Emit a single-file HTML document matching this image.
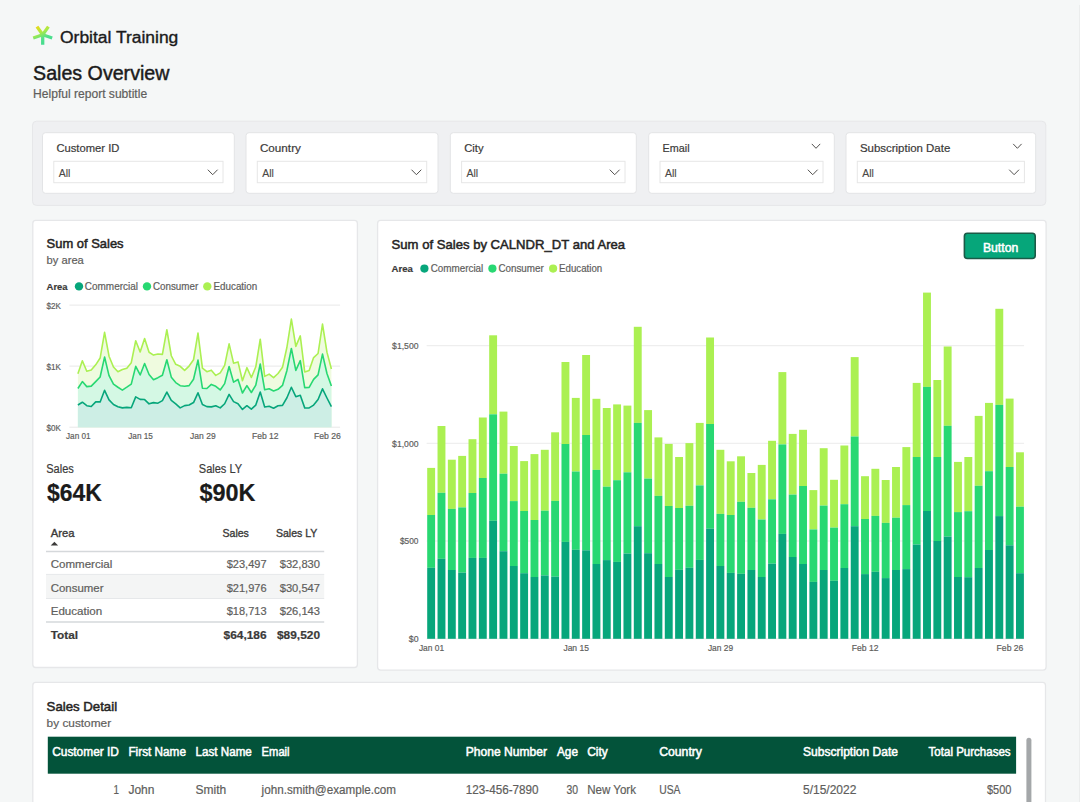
<!DOCTYPE html>
<html><head><meta charset="utf-8"><title>Sales Overview</title>
<style>
html,body{margin:0;padding:0;background:#f5f7f7;overflow:hidden;}
svg{display:block;font-family:"Liberation Sans", sans-serif;}
</style></head>
<body>
<svg width="1080" height="802" viewBox="0 0 1080 802">
<rect x="0" y="0" width="1080" height="802" fill="#f5f7f7"/>
<line x1="1079.5" y1="5" x2="1079.5" y2="802" stroke="#ebeded" stroke-width="1"/>
<defs><linearGradient id="lg" gradientUnits="userSpaceOnUse" x1="38" y1="26.5" x2="46" y2="43"><stop offset="0" stop-color="#e8da18"/><stop offset="0.35" stop-color="#a8ea48"/><stop offset="0.7" stop-color="#52e08a"/><stop offset="1" stop-color="#45dc90"/></linearGradient></defs>
<path d="M42.7,34.8 L37.0,26.6 M42.7,34.8 L48.4,26.6 M42.7,34.8 L33.2,38.0 M42.7,34.8 L52.2,38.0 M42.7,34.8 L42.7,44.8" stroke="url(#lg)" stroke-width="3.3" fill="none"/>
<text x="60" y="42.6" font-size="16" fill="#1b1b1b" textLength="118.3" lengthAdjust="spacingAndGlyphs" stroke="#1b1b1b" stroke-width="0.35">Orbital Training</text>
<text x="33.1" y="79.9" font-size="20" fill="#1b1b1b" textLength="136.3" lengthAdjust="spacingAndGlyphs" stroke="#1b1b1b" stroke-width="0.45">Sales Overview</text>
<text x="33.1" y="98" font-size="12" fill="#605e5c" textLength="114" lengthAdjust="spacingAndGlyphs" stroke="#605e5c" stroke-width="0.2">Helpful report subtitle</text>
<rect x="32.5" y="121.2" width="1013.3" height="84.2" fill="#eff0f2" stroke="#e6e7e9" stroke-width="1" rx="4"/>
<rect x="42.5" y="132.7" width="191.8" height="60.6" fill="#ffffff" stroke="#e3e4e6" stroke-width="1" rx="3"/>
<text x="56.4" y="152" font-size="11.5" fill="#3b3a39" textLength="63" lengthAdjust="spacingAndGlyphs" stroke="#3b3a39" stroke-width="0.2">Customer ID</text>
<rect x="53.8" y="161.3" width="169.20000000000002" height="21.4" fill="#ffffff" stroke="#e6e6e6" stroke-width="1"/>
<text x="58.7" y="177" font-size="10.5" fill="#4a4846" stroke="#4a4846" stroke-width="0.12">All</text>
<polyline points="207.8,169.7 212.70000000000002,174.7 217.60000000000002,169.7" fill="none" stroke="#4a4846" stroke-width="0.95"/>
<rect x="246" y="132.7" width="192" height="60.6" fill="#ffffff" stroke="#e3e4e6" stroke-width="1" rx="3"/>
<text x="259.9" y="152" font-size="11.5" fill="#3b3a39" textLength="41" lengthAdjust="spacingAndGlyphs" stroke="#3b3a39" stroke-width="0.2">Country</text>
<rect x="257.3" y="161.3" width="169.4" height="21.4" fill="#ffffff" stroke="#e6e6e6" stroke-width="1"/>
<text x="262.2" y="177" font-size="10.5" fill="#4a4846" stroke="#4a4846" stroke-width="0.12">All</text>
<polyline points="411.5,169.7 416.4,174.7 421.29999999999995,169.7" fill="none" stroke="#4a4846" stroke-width="0.95"/>
<rect x="450.3" y="132.7" width="185.99999999999994" height="60.6" fill="#ffffff" stroke="#e3e4e6" stroke-width="1" rx="3"/>
<text x="464.2" y="152" font-size="11.5" fill="#3b3a39" textLength="19.4" lengthAdjust="spacingAndGlyphs" stroke="#3b3a39" stroke-width="0.2">City</text>
<rect x="461.6" y="161.3" width="163.39999999999995" height="21.4" fill="#ffffff" stroke="#e6e6e6" stroke-width="1"/>
<text x="466.5" y="177" font-size="10.5" fill="#4a4846" stroke="#4a4846" stroke-width="0.12">All</text>
<polyline points="609.8,169.7 614.6999999999999,174.7 619.5999999999999,169.7" fill="none" stroke="#4a4846" stroke-width="0.95"/>
<rect x="648.7" y="132.7" width="185.5999999999999" height="60.6" fill="#ffffff" stroke="#e3e4e6" stroke-width="1" rx="3"/>
<text x="662.6" y="152" font-size="11.5" fill="#3b3a39" textLength="27" lengthAdjust="spacingAndGlyphs" stroke="#3b3a39" stroke-width="0.2">Email</text>
<rect x="660.0" y="161.3" width="162.99999999999991" height="21.4" fill="#ffffff" stroke="#e6e6e6" stroke-width="1"/>
<text x="664.9000000000001" y="177" font-size="10.5" fill="#4a4846" stroke="#4a4846" stroke-width="0.12">All</text>
<polyline points="807.8,169.7 812.6999999999999,174.7 817.5999999999999,169.7" fill="none" stroke="#4a4846" stroke-width="0.95"/>
<polyline points="811.8,143.9 816.0,148.29999999999998 820.2,143.9" fill="none" stroke="#4a4846" stroke-width="0.95"/>
<rect x="846" y="132.7" width="189.70000000000005" height="60.6" fill="#ffffff" stroke="#e3e4e6" stroke-width="1" rx="3"/>
<text x="859.9" y="152" font-size="11.5" fill="#3b3a39" textLength="90.4" lengthAdjust="spacingAndGlyphs" stroke="#3b3a39" stroke-width="0.2">Subscription Date</text>
<rect x="857.3" y="161.3" width="167.10000000000005" height="21.4" fill="#ffffff" stroke="#e6e6e6" stroke-width="1"/>
<text x="862.2" y="177" font-size="10.5" fill="#4a4846" stroke="#4a4846" stroke-width="0.12">All</text>
<polyline points="1009.2,169.7 1014.1,174.7 1019.0,169.7" fill="none" stroke="#4a4846" stroke-width="0.95"/>
<polyline points="1013.2,143.9 1017.4000000000001,148.29999999999998 1021.6000000000001,143.9" fill="none" stroke="#4a4846" stroke-width="0.95"/>
<rect x="32.8" y="220.4" width="324.6" height="447.1" fill="#ffffff" stroke="#e6e7e9" stroke-width="1.3" rx="3"/>
<rect x="377.6" y="220.4" width="668.5" height="449.7" fill="#ffffff" stroke="#e6e7e9" stroke-width="1.3" rx="3"/>
<rect x="32.8" y="682.4" width="1012.7" height="200" fill="#ffffff" stroke="#e6e7e9" stroke-width="1.3" rx="3"/>
<text x="46.6" y="248.2" font-size="13" fill="#252423" textLength="77" lengthAdjust="spacingAndGlyphs" stroke="#252423" stroke-width="0.5">Sum of Sales</text>
<text x="46.6" y="263.5" font-size="11.5" fill="#605e5c" textLength="37.2" lengthAdjust="spacingAndGlyphs" stroke="#605e5c" stroke-width="0.2">by area</text>
<text x="46.6" y="289.7" font-size="9.8" fill="#3b3a39" font-weight="700" textLength="21" lengthAdjust="spacingAndGlyphs" stroke="#3b3a39" stroke-width="0.2">Area</text>
<circle cx="79" cy="286.4" r="4.2" fill="#07a67b"/>
<text x="84.8" y="289.7" font-size="10.3" fill="#605e5c" textLength="53.2" lengthAdjust="spacingAndGlyphs" stroke="#605e5c" stroke-width="0.2">Commercial</text>
<circle cx="147" cy="286.4" r="4.2" fill="#28d872"/>
<text x="152.9" y="289.7" font-size="10.3" fill="#605e5c" textLength="45.3" lengthAdjust="spacingAndGlyphs" stroke="#605e5c" stroke-width="0.2">Consumer</text>
<circle cx="207.3" cy="286.4" r="4.2" fill="#abf052"/>
<text x="213.5" y="289.7" font-size="10.3" fill="#605e5c" textLength="43.7" lengthAdjust="spacingAndGlyphs" stroke="#605e5c" stroke-width="0.2">Education</text>
<line x1="69.4" y1="305.1" x2="340.1" y2="305.1" stroke="#e8e8e8" stroke-width="1"/>
<text x="46.6" y="308.5" font-size="9.2" fill="#605e5c" textLength="14.4" lengthAdjust="spacingAndGlyphs" stroke="#605e5c" stroke-width="0.2">$2K</text>
<line x1="69.4" y1="366.1" x2="340.1" y2="366.1" stroke="#e8e8e8" stroke-width="1"/>
<text x="46.6" y="369.5" font-size="9.2" fill="#605e5c" textLength="14.4" lengthAdjust="spacingAndGlyphs" stroke="#605e5c" stroke-width="0.2">$1K</text>
<line x1="69.4" y1="427.2" x2="340.1" y2="427.2" stroke="#e8e8e8" stroke-width="1"/>
<text x="46.6" y="430.59999999999997" font-size="9.2" fill="#605e5c" textLength="14.4" lengthAdjust="spacingAndGlyphs" stroke="#605e5c" stroke-width="0.2">$0K</text>
<polygon points="77.90,373.80 82.35,360.71 86.79,371.24 91.24,370.06 95.69,364.84 100.14,358.06 104.58,332.38 109.03,356.21 113.48,366.96 117.93,371.68 122.37,369.49 126.82,368.15 131.27,362.68 135.72,340.72 140.16,351.93 144.61,338.53 149.06,352.22 153.51,355.09 157.95,353.96 162.40,354.34 166.85,329.72 171.29,355.75 175.74,364.28 180.19,366.31 184.64,370.40 189.08,366.06 193.53,359.75 197.98,333.06 202.43,368.15 206.87,371.74 211.32,370.18 215.77,375.40 220.22,372.87 224.66,365.34 229.11,343.87 233.56,363.18 238.01,361.90 242.45,380.74 246.90,367.65 251.35,377.52 255.79,366.81 260.24,339.19 264.69,376.40 269.14,374.09 273.58,377.59 278.03,373.52 282.48,367.31 286.93,347.25 291.37,319.03 295.82,346.34 300.27,335.87 304.72,371.93 309.16,370.40 313.61,357.56 318.06,353.50 322.51,324.10 326.95,352.15 331.40,368.93 331.40,427.20 77.90,427.20" fill="#effbdf"/>
<polygon points="77.90,388.52 82.35,381.58 86.79,386.61 91.24,386.15 95.69,381.65 100.14,376.96 104.58,357.06 109.03,375.62 113.48,384.18 117.93,387.27 122.37,390.08 126.82,387.18 131.27,384.12 135.72,366.34 140.16,374.93 144.61,363.53 149.06,374.43 153.51,379.68 157.95,377.65 162.40,375.18 166.85,359.75 171.29,377.15 175.74,382.55 180.19,385.71 184.64,386.33 189.08,385.65 193.53,379.27 197.98,360.09 202.43,388.18 206.87,388.52 211.32,384.40 215.77,386.27 220.22,389.93 224.66,383.62 229.11,366.46 233.56,382.15 238.01,379.46 242.45,393.02 246.90,385.58 251.35,392.46 255.79,385.15 260.24,363.99 264.69,389.77 269.14,388.80 273.58,390.99 278.03,389.36 282.48,385.43 286.93,370.40 291.37,348.50 295.82,370.40 300.27,360.65 304.72,387.61 309.16,387.33 313.61,379.40 318.06,374.84 322.51,354.12 326.95,373.52 331.40,385.93 331.40,427.20 77.90,427.20" fill="#d4f8e4"/>
<polygon points="77.90,405.02 82.35,402.21 86.79,405.70 91.24,406.55 95.69,401.92 100.14,401.92 104.58,390.33 109.03,399.83 113.48,404.45 117.93,406.70 122.37,407.89 126.82,407.39 131.27,407.80 135.72,396.92 140.16,399.39 144.61,399.55 149.06,403.83 153.51,402.61 157.95,403.17 162.40,400.58 166.85,392.02 171.29,400.46 175.74,403.83 180.19,407.89 184.64,405.64 189.08,405.02 193.53,402.55 197.98,392.80 202.43,404.45 206.87,406.61 211.32,406.89 215.77,405.70 220.22,407.89 224.66,403.74 229.11,394.43 233.56,401.64 238.01,403.83 242.45,409.42 246.90,405.70 251.35,409.08 255.79,405.08 260.24,392.02 264.69,406.99 269.14,406.27 273.58,408.24 278.03,405.70 282.48,405.42 286.93,397.77 291.37,387.27 295.82,396.64 300.27,395.27 304.72,407.89 309.16,407.95 313.61,405.08 318.06,399.46 322.51,388.86 326.95,397.99 331.40,406.70 331.40,427.20 77.90,427.20" fill="#cdeee5"/>
<polyline points="77.90,373.80 82.35,360.71 86.79,371.24 91.24,370.06 95.69,364.84 100.14,358.06 104.58,332.38 109.03,356.21 113.48,366.96 117.93,371.68 122.37,369.49 126.82,368.15 131.27,362.68 135.72,340.72 140.16,351.93 144.61,338.53 149.06,352.22 153.51,355.09 157.95,353.96 162.40,354.34 166.85,329.72 171.29,355.75 175.74,364.28 180.19,366.31 184.64,370.40 189.08,366.06 193.53,359.75 197.98,333.06 202.43,368.15 206.87,371.74 211.32,370.18 215.77,375.40 220.22,372.87 224.66,365.34 229.11,343.87 233.56,363.18 238.01,361.90 242.45,380.74 246.90,367.65 251.35,377.52 255.79,366.81 260.24,339.19 264.69,376.40 269.14,374.09 273.58,377.59 278.03,373.52 282.48,367.31 286.93,347.25 291.37,319.03 295.82,346.34 300.27,335.87 304.72,371.93 309.16,370.40 313.61,357.56 318.06,353.50 322.51,324.10 326.95,352.15 331.40,368.93" fill="none" stroke="#abf052" stroke-width="1.6" stroke-linejoin="round"/>
<polyline points="77.90,388.52 82.35,381.58 86.79,386.61 91.24,386.15 95.69,381.65 100.14,376.96 104.58,357.06 109.03,375.62 113.48,384.18 117.93,387.27 122.37,390.08 126.82,387.18 131.27,384.12 135.72,366.34 140.16,374.93 144.61,363.53 149.06,374.43 153.51,379.68 157.95,377.65 162.40,375.18 166.85,359.75 171.29,377.15 175.74,382.55 180.19,385.71 184.64,386.33 189.08,385.65 193.53,379.27 197.98,360.09 202.43,388.18 206.87,388.52 211.32,384.40 215.77,386.27 220.22,389.93 224.66,383.62 229.11,366.46 233.56,382.15 238.01,379.46 242.45,393.02 246.90,385.58 251.35,392.46 255.79,385.15 260.24,363.99 264.69,389.77 269.14,388.80 273.58,390.99 278.03,389.36 282.48,385.43 286.93,370.40 291.37,348.50 295.82,370.40 300.27,360.65 304.72,387.61 309.16,387.33 313.61,379.40 318.06,374.84 322.51,354.12 326.95,373.52 331.40,385.93" fill="none" stroke="#28d872" stroke-width="1.6" stroke-linejoin="round"/>
<polyline points="77.90,405.02 82.35,402.21 86.79,405.70 91.24,406.55 95.69,401.92 100.14,401.92 104.58,390.33 109.03,399.83 113.48,404.45 117.93,406.70 122.37,407.89 126.82,407.39 131.27,407.80 135.72,396.92 140.16,399.39 144.61,399.55 149.06,403.83 153.51,402.61 157.95,403.17 162.40,400.58 166.85,392.02 171.29,400.46 175.74,403.83 180.19,407.89 184.64,405.64 189.08,405.02 193.53,402.55 197.98,392.80 202.43,404.45 206.87,406.61 211.32,406.89 215.77,405.70 220.22,407.89 224.66,403.74 229.11,394.43 233.56,401.64 238.01,403.83 242.45,409.42 246.90,405.70 251.35,409.08 255.79,405.08 260.24,392.02 264.69,406.99 269.14,406.27 273.58,408.24 278.03,405.70 282.48,405.42 286.93,397.77 291.37,387.27 295.82,396.64 300.27,395.27 304.72,407.89 309.16,407.95 313.61,405.08 318.06,399.46 322.51,388.86 326.95,397.99 331.40,406.70" fill="none" stroke="#07a67b" stroke-width="1.6" stroke-linejoin="round"/>
<text x="66" y="439.4" font-size="9.6" fill="#605e5c" textLength="24.6" lengthAdjust="spacingAndGlyphs" stroke="#605e5c" stroke-width="0.2">Jan 01</text>
<text x="128.2" y="439.4" font-size="9.6" fill="#605e5c" textLength="24.7" lengthAdjust="spacingAndGlyphs" stroke="#605e5c" stroke-width="0.2">Jan 15</text>
<text x="190.1" y="439.4" font-size="9.6" fill="#605e5c" textLength="25.6" lengthAdjust="spacingAndGlyphs" stroke="#605e5c" stroke-width="0.2">Jan 29</text>
<text x="252" y="439.4" font-size="9.6" fill="#605e5c" textLength="26.6" lengthAdjust="spacingAndGlyphs" stroke="#605e5c" stroke-width="0.2">Feb 12</text>
<text x="313.9" y="439.4" font-size="9.6" fill="#605e5c" textLength="26.9" lengthAdjust="spacingAndGlyphs" stroke="#605e5c" stroke-width="0.2">Feb 26</text>
<text x="46.2" y="472.8" font-size="12" fill="#3b3a39" textLength="27.6" lengthAdjust="spacingAndGlyphs" stroke="#3b3a39" stroke-width="0.2">Sales</text>
<text x="47.1" y="501.2" font-size="23" fill="#1b1b1b" font-weight="700" textLength="54.8" lengthAdjust="spacingAndGlyphs" stroke="#1b1b1b" stroke-width="0.2">$64K</text>
<text x="198.8" y="472.8" font-size="12" fill="#3b3a39" textLength="43.3" lengthAdjust="spacingAndGlyphs" stroke="#3b3a39" stroke-width="0.2">Sales LY</text>
<text x="199.4" y="501.2" font-size="23" fill="#1b1b1b" font-weight="700" textLength="56" lengthAdjust="spacingAndGlyphs" stroke="#1b1b1b" stroke-width="0.2">$90K</text>
<text x="50.7" y="536.5" font-size="11" fill="#3b3a39" textLength="23.7" lengthAdjust="spacingAndGlyphs" stroke="#3b3a39" stroke-width="0.35">Area</text>
<polygon points="50.7,545.4 58.1,545.4 54.4,541.7" fill="#3b3a39"/>
<text x="248.9" y="536.5" font-size="11" fill="#3b3a39" text-anchor="end" textLength="26.4" lengthAdjust="spacingAndGlyphs" stroke="#3b3a39" stroke-width="0.35">Sales</text>
<text x="317.4" y="536.5" font-size="11" fill="#3b3a39" text-anchor="end" textLength="41.5" lengthAdjust="spacingAndGlyphs" stroke="#3b3a39" stroke-width="0.35">Sales LY</text>
<rect x="46" y="574.4" width="278.2" height="24.1" fill="#f4f5f5"/>
<line x1="46" y1="551.5" x2="324.2" y2="551.5" stroke="#d5d8db" stroke-width="1.5"/>
<line x1="46" y1="574.4" x2="324.2" y2="574.4" stroke="#e6e8ea" stroke-width="1"/>
<line x1="46" y1="598.5" x2="324.2" y2="598.5" stroke="#e6e8ea" stroke-width="1"/>
<line x1="46" y1="622.1" x2="324.2" y2="622.1" stroke="#d5d8db" stroke-width="1.5"/>
<text x="50.7" y="567.9" font-size="11" fill="#605e5c" textLength="61.6" lengthAdjust="spacingAndGlyphs" stroke="#605e5c" stroke-width="0.2">Commercial</text>
<text x="266.6" y="567.9" font-size="11" fill="#605e5c" text-anchor="end" textLength="39.9" lengthAdjust="spacingAndGlyphs" stroke="#605e5c" stroke-width="0.2">$23,497</text>
<text x="320.0" y="567.9" font-size="11" fill="#605e5c" text-anchor="end" textLength="40.3" lengthAdjust="spacingAndGlyphs" stroke="#605e5c" stroke-width="0.2">$32,830</text>
<text x="50.7" y="591.6" font-size="11" fill="#605e5c" textLength="52.8" lengthAdjust="spacingAndGlyphs" stroke="#605e5c" stroke-width="0.2">Consumer</text>
<text x="266.6" y="591.6" font-size="11" fill="#605e5c" text-anchor="end" textLength="39.9" lengthAdjust="spacingAndGlyphs" stroke="#605e5c" stroke-width="0.2">$21,976</text>
<text x="320.0" y="591.6" font-size="11" fill="#605e5c" text-anchor="end" textLength="40.3" lengthAdjust="spacingAndGlyphs" stroke="#605e5c" stroke-width="0.2">$30,547</text>
<text x="50.7" y="615.3" font-size="11" fill="#605e5c" textLength="51.5" lengthAdjust="spacingAndGlyphs" stroke="#605e5c" stroke-width="0.2">Education</text>
<text x="266.6" y="615.3" font-size="11" fill="#605e5c" text-anchor="end" textLength="39.9" lengthAdjust="spacingAndGlyphs" stroke="#605e5c" stroke-width="0.2">$18,713</text>
<text x="320.0" y="615.3" font-size="11" fill="#605e5c" text-anchor="end" textLength="40.3" lengthAdjust="spacingAndGlyphs" stroke="#605e5c" stroke-width="0.2">$26,143</text>
<text x="50.7" y="638.7" font-size="11" fill="#3b3a39" font-weight="700" textLength="27.3" lengthAdjust="spacingAndGlyphs" stroke="#3b3a39" stroke-width="0.2">Total</text>
<text x="266.6" y="638.7" font-size="11" fill="#3b3a39" font-weight="700" text-anchor="end" textLength="43" lengthAdjust="spacingAndGlyphs" stroke="#3b3a39" stroke-width="0.2">$64,186</text>
<text x="320.0" y="638.7" font-size="11" fill="#3b3a39" font-weight="700" text-anchor="end" textLength="43" lengthAdjust="spacingAndGlyphs" stroke="#3b3a39" stroke-width="0.2">$89,520</text>
<text x="391.6" y="249" font-size="13" fill="#252423" textLength="233.5" lengthAdjust="spacingAndGlyphs" stroke="#252423" stroke-width="0.5">Sum of Sales by CALNDR_DT and Area</text>
<text x="391.6" y="272.1" font-size="9.8" fill="#3b3a39" font-weight="700" textLength="21.3" lengthAdjust="spacingAndGlyphs" stroke="#3b3a39" stroke-width="0.2">Area</text>
<circle cx="424.4" cy="268.6" r="4.1" fill="#07a67b"/>
<text x="430.7" y="272.1" font-size="10.3" fill="#605e5c" textLength="52.6" lengthAdjust="spacingAndGlyphs" stroke="#605e5c" stroke-width="0.2">Commercial</text>
<circle cx="492.4" cy="268.6" r="4.1" fill="#28d872"/>
<text x="498.4" y="272.1" font-size="10.3" fill="#605e5c" textLength="45.4" lengthAdjust="spacingAndGlyphs" stroke="#605e5c" stroke-width="0.2">Consumer</text>
<circle cx="553.1" cy="268.6" r="4.1" fill="#abf052"/>
<text x="559.1" y="272.1" font-size="10.3" fill="#605e5c" textLength="43.1" lengthAdjust="spacingAndGlyphs" stroke="#605e5c" stroke-width="0.2">Education</text>
<rect x="964.4" y="233.3" width="70.8" height="25.2" fill="#06a67a" stroke="#1b5a47" stroke-width="1.6" rx="3"/>
<text x="1000.6" y="251.7" font-size="12" fill="#ffffff" text-anchor="middle" textLength="35.3" lengthAdjust="spacingAndGlyphs" stroke="#ffffff" stroke-width="0.5">Button</text>
<line x1="426.6" y1="345.7" x2="1024.1" y2="345.7" stroke="#ebebeb" stroke-width="1"/>
<text x="418.5" y="349.0" font-size="9.4" fill="#605e5c" text-anchor="end" textLength="26.4" lengthAdjust="spacingAndGlyphs" stroke="#605e5c" stroke-width="0.2">$1,500</text>
<line x1="426.6" y1="443.3" x2="1024.1" y2="443.3" stroke="#ebebeb" stroke-width="1"/>
<text x="418.5" y="446.6" font-size="9.4" fill="#605e5c" text-anchor="end" textLength="26.4" lengthAdjust="spacingAndGlyphs" stroke="#605e5c" stroke-width="0.2">$1,000</text>
<line x1="426.6" y1="541.0" x2="1024.1" y2="541.0" stroke="#ebebeb" stroke-width="1"/>
<text x="418.5" y="544.3" font-size="9.4" fill="#605e5c" text-anchor="end" textLength="18.5" lengthAdjust="spacingAndGlyphs" stroke="#605e5c" stroke-width="0.2">$500</text>
<line x1="426.6" y1="638.7" x2="1024.1" y2="638.7" stroke="#ebebeb" stroke-width="1"/>
<text x="418.5" y="642.0" font-size="9.4" fill="#605e5c" text-anchor="end" textLength="9.7" lengthAdjust="spacingAndGlyphs" stroke="#605e5c" stroke-width="0.2">$0</text>
<rect x="427.2" y="467.9" width="7.9" height="47.1" fill="#abf052"/>
<rect x="427.2" y="515.0" width="7.9" height="52.8" fill="#28d872"/>
<rect x="427.2" y="567.8" width="7.9" height="71.0" fill="#07a67b"/>
<rect x="437.53" y="426.0" width="7.9" height="66.8" fill="#abf052"/>
<rect x="437.53" y="492.8" width="7.9" height="66.0" fill="#28d872"/>
<rect x="437.53" y="558.8" width="7.9" height="80.0" fill="#07a67b"/>
<rect x="447.86" y="459.7" width="7.9" height="49.2" fill="#abf052"/>
<rect x="447.86" y="508.9" width="7.9" height="61.1" fill="#28d872"/>
<rect x="447.86" y="570.0" width="7.9" height="68.8" fill="#07a67b"/>
<rect x="458.19" y="455.9" width="7.9" height="51.5" fill="#abf052"/>
<rect x="458.19" y="507.4" width="7.9" height="65.3" fill="#28d872"/>
<rect x="458.19" y="572.7" width="7.9" height="66.1" fill="#07a67b"/>
<rect x="468.52" y="439.2" width="7.9" height="53.8" fill="#abf052"/>
<rect x="468.52" y="493.0" width="7.9" height="64.9" fill="#28d872"/>
<rect x="468.52" y="557.9" width="7.9" height="80.9" fill="#07a67b"/>
<rect x="478.85" y="417.5" width="7.9" height="60.5" fill="#abf052"/>
<rect x="478.85" y="478.0" width="7.9" height="79.9" fill="#28d872"/>
<rect x="478.85" y="557.9" width="7.9" height="80.9" fill="#07a67b"/>
<rect x="489.18" y="335.3" width="7.9" height="79.0" fill="#abf052"/>
<rect x="489.18" y="414.3" width="7.9" height="106.5" fill="#28d872"/>
<rect x="489.18" y="520.8" width="7.9" height="118.0" fill="#07a67b"/>
<rect x="499.51" y="411.6" width="7.9" height="62.1" fill="#abf052"/>
<rect x="499.51" y="473.7" width="7.9" height="77.5" fill="#28d872"/>
<rect x="499.51" y="551.2" width="7.9" height="87.6" fill="#07a67b"/>
<rect x="509.84" y="446.0" width="7.9" height="55.1" fill="#abf052"/>
<rect x="509.84" y="501.1" width="7.9" height="64.9" fill="#28d872"/>
<rect x="509.84" y="566.0" width="7.9" height="72.8" fill="#07a67b"/>
<rect x="520.17" y="461.1" width="7.9" height="49.9" fill="#abf052"/>
<rect x="520.17" y="511.0" width="7.9" height="62.2" fill="#28d872"/>
<rect x="520.17" y="573.2" width="7.9" height="65.6" fill="#07a67b"/>
<rect x="530.5" y="454.1" width="7.9" height="65.9" fill="#abf052"/>
<rect x="530.5" y="520.0" width="7.9" height="57.0" fill="#28d872"/>
<rect x="530.5" y="577.0" width="7.9" height="61.8" fill="#07a67b"/>
<rect x="540.83" y="449.8" width="7.9" height="60.9" fill="#abf052"/>
<rect x="540.83" y="510.7" width="7.9" height="64.7" fill="#28d872"/>
<rect x="540.83" y="575.4" width="7.9" height="63.4" fill="#07a67b"/>
<rect x="551.16" y="432.3" width="7.9" height="68.6" fill="#abf052"/>
<rect x="551.16" y="500.9" width="7.9" height="75.8" fill="#28d872"/>
<rect x="551.16" y="576.7" width="7.9" height="62.1" fill="#07a67b"/>
<rect x="561.49" y="362.0" width="7.9" height="82.0" fill="#abf052"/>
<rect x="561.49" y="444.0" width="7.9" height="97.9" fill="#28d872"/>
<rect x="561.49" y="541.9" width="7.9" height="96.9" fill="#07a67b"/>
<rect x="571.82" y="397.9" width="7.9" height="73.6" fill="#abf052"/>
<rect x="571.82" y="471.5" width="7.9" height="78.3" fill="#28d872"/>
<rect x="571.82" y="549.8" width="7.9" height="89.0" fill="#07a67b"/>
<rect x="582.15" y="355.0" width="7.9" height="80.0" fill="#abf052"/>
<rect x="582.15" y="435.0" width="7.9" height="115.3" fill="#28d872"/>
<rect x="582.15" y="550.3" width="7.9" height="88.5" fill="#07a67b"/>
<rect x="592.48" y="398.8" width="7.9" height="71.1" fill="#abf052"/>
<rect x="592.48" y="469.9" width="7.9" height="94.1" fill="#28d872"/>
<rect x="592.48" y="564.0" width="7.9" height="74.8" fill="#07a67b"/>
<rect x="602.81" y="408.0" width="7.9" height="78.7" fill="#abf052"/>
<rect x="602.81" y="486.7" width="7.9" height="73.4" fill="#28d872"/>
<rect x="602.81" y="560.1" width="7.9" height="78.7" fill="#07a67b"/>
<rect x="613.14" y="404.4" width="7.9" height="75.8" fill="#abf052"/>
<rect x="613.14" y="480.2" width="7.9" height="81.7" fill="#28d872"/>
<rect x="613.14" y="561.9" width="7.9" height="76.9" fill="#07a67b"/>
<rect x="623.47" y="405.6" width="7.9" height="66.7" fill="#abf052"/>
<rect x="623.47" y="472.3" width="7.9" height="81.3" fill="#28d872"/>
<rect x="623.47" y="553.6" width="7.9" height="85.2" fill="#07a67b"/>
<rect x="633.8" y="326.8" width="7.9" height="96.1" fill="#abf052"/>
<rect x="633.8" y="422.9" width="7.9" height="103.3" fill="#28d872"/>
<rect x="633.8" y="526.2" width="7.9" height="112.6" fill="#07a67b"/>
<rect x="644.13" y="410.1" width="7.9" height="68.5" fill="#abf052"/>
<rect x="644.13" y="478.6" width="7.9" height="74.6" fill="#28d872"/>
<rect x="644.13" y="553.2" width="7.9" height="85.6" fill="#07a67b"/>
<rect x="654.46" y="437.4" width="7.9" height="58.5" fill="#abf052"/>
<rect x="654.46" y="495.9" width="7.9" height="68.1" fill="#28d872"/>
<rect x="654.46" y="564.0" width="7.9" height="74.8" fill="#07a67b"/>
<rect x="664.79" y="443.9" width="7.9" height="62.1" fill="#abf052"/>
<rect x="664.79" y="506.0" width="7.9" height="71.0" fill="#28d872"/>
<rect x="664.79" y="577.0" width="7.9" height="61.8" fill="#07a67b"/>
<rect x="675.12" y="457.0" width="7.9" height="51.0" fill="#abf052"/>
<rect x="675.12" y="508.0" width="7.9" height="61.8" fill="#28d872"/>
<rect x="675.12" y="569.8" width="7.9" height="69.0" fill="#07a67b"/>
<rect x="685.45" y="443.1" width="7.9" height="62.7" fill="#abf052"/>
<rect x="685.45" y="505.8" width="7.9" height="62.0" fill="#28d872"/>
<rect x="685.45" y="567.8" width="7.9" height="71.0" fill="#07a67b"/>
<rect x="695.78" y="422.9" width="7.9" height="62.5" fill="#abf052"/>
<rect x="695.78" y="485.4" width="7.9" height="74.5" fill="#28d872"/>
<rect x="695.78" y="559.9" width="7.9" height="78.9" fill="#07a67b"/>
<rect x="706.11" y="337.5" width="7.9" height="86.5" fill="#abf052"/>
<rect x="706.11" y="424.0" width="7.9" height="104.7" fill="#28d872"/>
<rect x="706.11" y="528.7" width="7.9" height="110.1" fill="#07a67b"/>
<rect x="716.44" y="449.8" width="7.9" height="64.1" fill="#abf052"/>
<rect x="716.44" y="513.9" width="7.9" height="52.1" fill="#28d872"/>
<rect x="716.44" y="566.0" width="7.9" height="72.8" fill="#07a67b"/>
<rect x="726.77" y="461.3" width="7.9" height="53.7" fill="#abf052"/>
<rect x="726.77" y="515.0" width="7.9" height="57.9" fill="#28d872"/>
<rect x="726.77" y="572.9" width="7.9" height="65.9" fill="#07a67b"/>
<rect x="737.1" y="456.3" width="7.9" height="45.5" fill="#abf052"/>
<rect x="737.1" y="501.8" width="7.9" height="72.0" fill="#28d872"/>
<rect x="737.1" y="573.8" width="7.9" height="65.0" fill="#07a67b"/>
<rect x="747.43" y="473.0" width="7.9" height="34.8" fill="#abf052"/>
<rect x="747.43" y="507.8" width="7.9" height="62.2" fill="#28d872"/>
<rect x="747.43" y="570.0" width="7.9" height="68.8" fill="#07a67b"/>
<rect x="757.76" y="464.9" width="7.9" height="54.6" fill="#abf052"/>
<rect x="757.76" y="519.5" width="7.9" height="57.5" fill="#28d872"/>
<rect x="757.76" y="577.0" width="7.9" height="61.8" fill="#07a67b"/>
<rect x="768.09" y="440.8" width="7.9" height="58.5" fill="#abf052"/>
<rect x="768.09" y="499.3" width="7.9" height="64.4" fill="#28d872"/>
<rect x="768.09" y="563.7" width="7.9" height="75.1" fill="#07a67b"/>
<rect x="778.42" y="372.1" width="7.9" height="72.3" fill="#abf052"/>
<rect x="778.42" y="444.4" width="7.9" height="89.5" fill="#28d872"/>
<rect x="778.42" y="533.9" width="7.9" height="104.9" fill="#07a67b"/>
<rect x="788.75" y="433.9" width="7.9" height="60.7" fill="#abf052"/>
<rect x="788.75" y="494.6" width="7.9" height="62.4" fill="#28d872"/>
<rect x="788.75" y="557.0" width="7.9" height="81.8" fill="#07a67b"/>
<rect x="799.08" y="429.8" width="7.9" height="56.2" fill="#abf052"/>
<rect x="799.08" y="486.0" width="7.9" height="78.0" fill="#28d872"/>
<rect x="799.08" y="564.0" width="7.9" height="74.8" fill="#07a67b"/>
<rect x="809.41" y="490.1" width="7.9" height="39.3" fill="#abf052"/>
<rect x="809.41" y="529.4" width="7.9" height="52.5" fill="#28d872"/>
<rect x="809.41" y="581.9" width="7.9" height="56.9" fill="#07a67b"/>
<rect x="819.74" y="448.2" width="7.9" height="57.4" fill="#abf052"/>
<rect x="819.74" y="505.6" width="7.9" height="64.4" fill="#28d872"/>
<rect x="819.74" y="570.0" width="7.9" height="68.8" fill="#07a67b"/>
<rect x="830.07" y="479.8" width="7.9" height="47.8" fill="#abf052"/>
<rect x="830.07" y="527.6" width="7.9" height="53.2" fill="#28d872"/>
<rect x="830.07" y="580.8" width="7.9" height="58.0" fill="#07a67b"/>
<rect x="840.4" y="445.5" width="7.9" height="58.7" fill="#abf052"/>
<rect x="840.4" y="504.2" width="7.9" height="63.8" fill="#28d872"/>
<rect x="840.4" y="568.0" width="7.9" height="70.8" fill="#07a67b"/>
<rect x="850.73" y="357.1" width="7.9" height="79.4" fill="#abf052"/>
<rect x="850.73" y="436.5" width="7.9" height="89.7" fill="#28d872"/>
<rect x="850.73" y="526.2" width="7.9" height="112.6" fill="#07a67b"/>
<rect x="861.06" y="476.2" width="7.9" height="42.8" fill="#abf052"/>
<rect x="861.06" y="519.0" width="7.9" height="55.1" fill="#28d872"/>
<rect x="861.06" y="574.1" width="7.9" height="64.7" fill="#07a67b"/>
<rect x="871.39" y="468.8" width="7.9" height="47.1" fill="#abf052"/>
<rect x="871.39" y="515.9" width="7.9" height="55.9" fill="#28d872"/>
<rect x="871.39" y="571.8" width="7.9" height="67.0" fill="#07a67b"/>
<rect x="881.72" y="480.0" width="7.9" height="42.9" fill="#abf052"/>
<rect x="881.72" y="522.9" width="7.9" height="55.2" fill="#28d872"/>
<rect x="881.72" y="578.1" width="7.9" height="60.7" fill="#07a67b"/>
<rect x="892.05" y="467.0" width="7.9" height="50.7" fill="#abf052"/>
<rect x="892.05" y="517.7" width="7.9" height="52.3" fill="#28d872"/>
<rect x="892.05" y="570.0" width="7.9" height="68.8" fill="#07a67b"/>
<rect x="902.38" y="447.1" width="7.9" height="58.0" fill="#abf052"/>
<rect x="902.38" y="505.1" width="7.9" height="64.0" fill="#28d872"/>
<rect x="902.38" y="569.1" width="7.9" height="69.7" fill="#07a67b"/>
<rect x="912.71" y="382.9" width="7.9" height="74.1" fill="#abf052"/>
<rect x="912.71" y="457.0" width="7.9" height="87.6" fill="#28d872"/>
<rect x="912.71" y="544.6" width="7.9" height="94.2" fill="#07a67b"/>
<rect x="923.04" y="292.6" width="7.9" height="94.3" fill="#abf052"/>
<rect x="923.04" y="386.9" width="7.9" height="124.1" fill="#28d872"/>
<rect x="923.04" y="511.0" width="7.9" height="127.8" fill="#07a67b"/>
<rect x="933.37" y="380.0" width="7.9" height="77.0" fill="#abf052"/>
<rect x="933.37" y="457.0" width="7.9" height="84.0" fill="#28d872"/>
<rect x="933.37" y="541.0" width="7.9" height="97.8" fill="#07a67b"/>
<rect x="943.7" y="346.5" width="7.9" height="79.3" fill="#abf052"/>
<rect x="943.7" y="425.8" width="7.9" height="110.8" fill="#28d872"/>
<rect x="943.7" y="536.6" width="7.9" height="102.2" fill="#07a67b"/>
<rect x="954.03" y="461.9" width="7.9" height="50.2" fill="#abf052"/>
<rect x="954.03" y="512.1" width="7.9" height="64.9" fill="#28d872"/>
<rect x="954.03" y="577.0" width="7.9" height="61.8" fill="#07a67b"/>
<rect x="964.36" y="457.0" width="7.9" height="54.2" fill="#abf052"/>
<rect x="964.36" y="511.2" width="7.9" height="66.0" fill="#28d872"/>
<rect x="964.36" y="577.2" width="7.9" height="61.6" fill="#07a67b"/>
<rect x="974.69" y="415.9" width="7.9" height="69.9" fill="#abf052"/>
<rect x="974.69" y="485.8" width="7.9" height="82.2" fill="#28d872"/>
<rect x="974.69" y="568.0" width="7.9" height="70.8" fill="#07a67b"/>
<rect x="985.02" y="402.9" width="7.9" height="68.3" fill="#abf052"/>
<rect x="985.02" y="471.2" width="7.9" height="78.8" fill="#28d872"/>
<rect x="985.02" y="550.0" width="7.9" height="88.8" fill="#07a67b"/>
<rect x="995.35" y="308.8" width="7.9" height="96.1" fill="#abf052"/>
<rect x="995.35" y="404.9" width="7.9" height="111.2" fill="#28d872"/>
<rect x="995.35" y="516.1" width="7.9" height="122.7" fill="#07a67b"/>
<rect x="1005.68" y="398.6" width="7.9" height="68.4" fill="#abf052"/>
<rect x="1005.68" y="467.0" width="7.9" height="78.3" fill="#28d872"/>
<rect x="1005.68" y="545.3" width="7.9" height="93.5" fill="#07a67b"/>
<rect x="1016.01" y="452.3" width="7.9" height="54.4" fill="#abf052"/>
<rect x="1016.01" y="506.7" width="7.9" height="66.5" fill="#28d872"/>
<rect x="1016.01" y="573.2" width="7.9" height="65.6" fill="#07a67b"/>
<text x="418.9" y="651.4" font-size="9.6" fill="#605e5c" textLength="25.2" lengthAdjust="spacingAndGlyphs" stroke="#605e5c" stroke-width="0.2">Jan 01</text>
<text x="563.4" y="651.4" font-size="9.6" fill="#605e5c" textLength="25.5" lengthAdjust="spacingAndGlyphs" stroke="#605e5c" stroke-width="0.2">Jan 15</text>
<text x="707.9" y="651.4" font-size="9.6" fill="#605e5c" textLength="25.2" lengthAdjust="spacingAndGlyphs" stroke="#605e5c" stroke-width="0.2">Jan 29</text>
<text x="851.8" y="651.4" font-size="9.6" fill="#605e5c" textLength="26.7" lengthAdjust="spacingAndGlyphs" stroke="#605e5c" stroke-width="0.2">Feb 12</text>
<text x="996.6" y="651.4" font-size="9.6" fill="#605e5c" textLength="26.8" lengthAdjust="spacingAndGlyphs" stroke="#605e5c" stroke-width="0.2">Feb 26</text>
<text x="46.6" y="711" font-size="13" fill="#252423" textLength="70.5" lengthAdjust="spacingAndGlyphs" stroke="#252423" stroke-width="0.5">Sales Detail</text>
<text x="46.6" y="726.5" font-size="11.5" fill="#605e5c" textLength="64.5" lengthAdjust="spacingAndGlyphs" stroke="#605e5c" stroke-width="0.2">by customer</text>
<rect x="47.8" y="736.7" width="968.3" height="37" fill="#03533a"/>
<text x="52.2" y="756.2" font-size="12" fill="#ffffff" textLength="66.7" lengthAdjust="spacingAndGlyphs" stroke="#ffffff" stroke-width="0.5">Customer ID</text>
<text x="128.4" y="756.2" font-size="12" fill="#ffffff" textLength="57.6" lengthAdjust="spacingAndGlyphs" stroke="#ffffff" stroke-width="0.5">First Name</text>
<text x="195.6" y="756.2" font-size="12" fill="#ffffff" textLength="56.2" lengthAdjust="spacingAndGlyphs" stroke="#ffffff" stroke-width="0.5">Last Name</text>
<text x="261.6" y="756.2" font-size="12" fill="#ffffff" textLength="28" lengthAdjust="spacingAndGlyphs" stroke="#ffffff" stroke-width="0.5">Email</text>
<text x="465.8" y="756.2" font-size="12" fill="#ffffff" textLength="81.2" lengthAdjust="spacingAndGlyphs" stroke="#ffffff" stroke-width="0.5">Phone Number</text>
<text x="557" y="756.2" font-size="12" fill="#ffffff" textLength="21" lengthAdjust="spacingAndGlyphs" stroke="#ffffff" stroke-width="0.5">Age</text>
<text x="587.2" y="756.2" font-size="12" fill="#ffffff" textLength="20.6" lengthAdjust="spacingAndGlyphs" stroke="#ffffff" stroke-width="0.5">City</text>
<text x="659.2" y="756.2" font-size="12" fill="#ffffff" textLength="42.8" lengthAdjust="spacingAndGlyphs" stroke="#ffffff" stroke-width="0.5">Country</text>
<text x="803" y="756.2" font-size="12" fill="#ffffff" textLength="95" lengthAdjust="spacingAndGlyphs" stroke="#ffffff" stroke-width="0.5">Subscription Date</text>
<text x="928.6" y="756.2" font-size="12" fill="#ffffff" textLength="82" lengthAdjust="spacingAndGlyphs" stroke="#ffffff" stroke-width="0.5">Total Purchases</text>
<text x="118.9" y="794.4" font-size="12" fill="#605e5c" text-anchor="end" textLength="5.5" lengthAdjust="spacingAndGlyphs" stroke="#605e5c" stroke-width="0.2">1</text>
<text x="128.4" y="794.4" font-size="12" fill="#605e5c" stroke="#605e5c" stroke-width="0.2">John</text>
<text x="195.6" y="794.4" font-size="12" fill="#605e5c" stroke="#605e5c" stroke-width="0.2">Smith</text>
<text x="261.6" y="794.4" font-size="12" fill="#605e5c" textLength="134.5" lengthAdjust="spacingAndGlyphs" stroke="#605e5c" stroke-width="0.2">john.smith@example.com</text>
<text x="465.8" y="794.4" font-size="12" fill="#605e5c" textLength="72.8" lengthAdjust="spacingAndGlyphs" stroke="#605e5c" stroke-width="0.2">123-456-7890</text>
<text x="578" y="794.4" font-size="12" fill="#605e5c" text-anchor="end" textLength="11.6" lengthAdjust="spacingAndGlyphs" stroke="#605e5c" stroke-width="0.2">30</text>
<text x="587.2" y="794.4" font-size="12" fill="#605e5c" textLength="48.8" lengthAdjust="spacingAndGlyphs" stroke="#605e5c" stroke-width="0.2">New York</text>
<text x="659.2" y="794.4" font-size="12" fill="#605e5c" textLength="21.3" lengthAdjust="spacingAndGlyphs" stroke="#605e5c" stroke-width="0.2">USA</text>
<text x="803" y="794.4" font-size="12" fill="#605e5c" textLength="53.4" lengthAdjust="spacingAndGlyphs" stroke="#605e5c" stroke-width="0.2">5/15/2022</text>
<text x="1011.4" y="794.4" font-size="12" fill="#605e5c" text-anchor="end" textLength="24.4" lengthAdjust="spacingAndGlyphs" stroke="#605e5c" stroke-width="0.2">$500</text>
<rect x="1026.4" y="737.8" width="5" height="80" fill="#a4a7a9" rx="2.5"/>
</svg>
</body></html>
